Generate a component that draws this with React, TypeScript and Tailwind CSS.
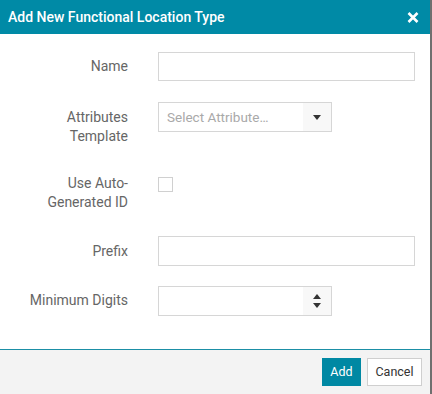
import React from "react";

export default function App() {
  const font = { fontFamily: "Roboto, 'Liberation Sans', sans-serif" };
  return (
    <div className="w-[432px] h-[394px] flex flex-col bg-white border-r-2 border-[#6f6f6f] overflow-hidden" style={font}>
      <div className="h-[34px] shrink-0 bg-[#008aa6] flex items-center justify-between pl-[8px] pr-[11px]">
        <span className="text-white text-[14px] font-medium leading-none">Add New Functional Location Type</span>
        <svg width="12" height="11" viewBox="0 0 12 11" className="mt-[1px]">
          <path d="M1.5 1 L10.5 10 M10.5 1 L1.5 10" stroke="white" strokeWidth="2.6" strokeLinecap="butt" />
        </svg>
      </div>
      <div className="flex-1 pt-[18px] text-[14px] leading-[19px] text-[#666]">
        <div className="flex">
          <label className="w-[128px] text-right pt-[5px]">Name</label>
          <input className="ml-[30px] w-[257px] h-[29px] border border-[#d6d6d6] outline-none px-2" />
        </div>
        <div className="flex mt-[21px]">
          <label className="w-[128px] text-right pt-[6px]">Attributes<br />Template</label>
          <div className="ml-[30px] w-[174px] h-[30px] border border-[#d6d6d6] flex">
            <div className="flex-1 pl-[8px] flex items-center text-[13.5px] text-[#a9a9a9]">Select Attribute…</div>
            <div className="w-[28px] bg-[#f8f8f8] flex items-center justify-center">
              <svg width="8" height="5" viewBox="0 0 8 5"><path d="M0 0 H8 L4 5 Z" fill="#333" /></svg>
            </div>
          </div>
        </div>
        <div className="flex mt-[28px]">
          <label className="w-[128px] text-right">Use Auto-<br />Generated ID</label>
          <div className="ml-[30px] mt-[3px] w-[15px] h-[15px] border border-[#d0d0d0] bg-white" />
        </div>
        <div className="flex mt-[24px]">
          <label className="w-[128px] text-right pt-[6px]">Prefix</label>
          <input className="ml-[30px] w-[257px] h-[30px] border border-[#d6d6d6] outline-none px-2" />
        </div>
        <div className="flex mt-[20px]">
          <label className="w-[128px] text-right pt-[5px] whitespace-nowrap">Minimum Digits</label>
          <div className="ml-[30px] w-[174px] h-[30px] border border-[#d6d6d6] flex">
            <div className="flex-1" />
            <div className="w-[28px] bg-[#f8f8f8] flex flex-col items-center justify-center gap-[4px]">
              <svg width="8" height="5" viewBox="0 0 8 5"><path d="M0 5 H8 L4 0 Z" fill="#333" /></svg>
              <svg width="8" height="5" viewBox="0 0 8 5"><path d="M0 0 H8 L4 5 Z" fill="#333" /></svg>
            </div>
          </div>
        </div>
      </div>
      <div className="h-[45px] shrink-0 border-t border-[#1b8fa6] bg-[#f3f3f3] flex justify-end items-start pt-[8px] pr-[8px] gap-[6px]">
        <button className="h-[28px] w-[39px] bg-[#0088a3] text-white text-[12.5px]">Add</button>
        <button className="h-[28px] w-[55px] bg-white border border-[#cfcfcf] text-[#333] text-[12.5px]">Cancel</button>
      </div>
    </div>
  );
}
